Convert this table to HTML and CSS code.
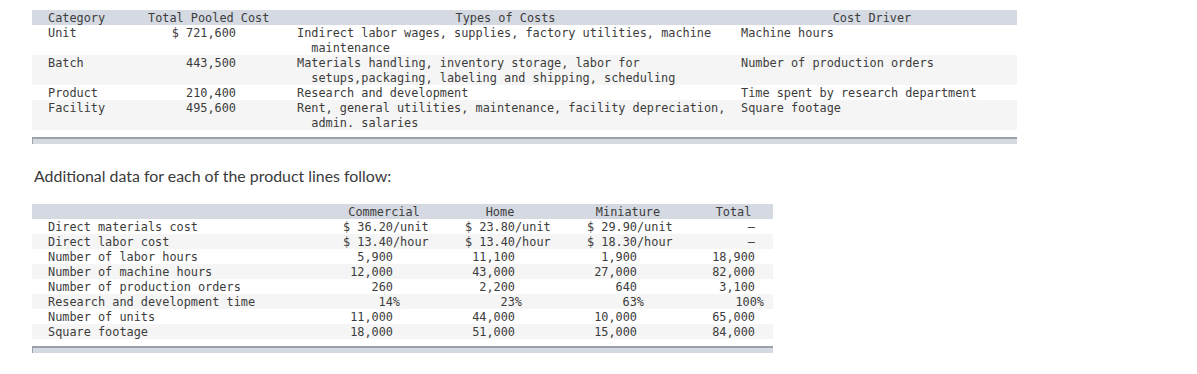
FILE: index.html
```html
<!DOCTYPE html>
<html lang="en">
<head>
<meta charset="utf-8">
<title>Activity cost pools</title>
<link rel="stylesheet" href="styles.css">
</head>
<body>
<div class="page">
  <div class="tbl pools">
    <div class="row head">
      <div class="c cat">Category</div>
      <div class="c pool">Total Pooled Cost</div>
      <div class="c types">Types of Costs</div>
      <div class="c driver">Cost Driver</div>
    </div>
    <div class="row">
      <div class="c cat">Unit</div>
      <div class="c pool">$ 721,600</div>
      <div class="c types">Indirect labor wages, supplies, factory utilities, machine maintenance</div>
      <div class="c driver">Machine hours</div>
    </div>
    <div class="row alt">
      <div class="c cat">Batch</div>
      <div class="c pool">443,500</div>
      <div class="c types">Materials handling, inventory storage, labor for setups,packaging, labeling and shipping, scheduling</div>
      <div class="c driver">Number of production orders</div>
    </div>
    <div class="row">
      <div class="c cat">Product</div>
      <div class="c pool">210,400</div>
      <div class="c types">Research and development</div>
      <div class="c driver">Time spent by research department</div>
    </div>
    <div class="row alt">
      <div class="c cat">Facility</div>
      <div class="c pool">495,600</div>
      <div class="c types">Rent, general utilities, maintenance, facility depreciation, admin. salaries</div>
      <div class="c driver">Square footage</div>
    </div>
  </div>
  <div class="bar bar-wide"></div>

  <p class="intro">Additional data for each of the product lines follow:</p>

  <div class="tbl lines">
    <div class="row head">
      <div class="c label"></div>
      <div class="c com">Commercial</div>
      <div class="c home">Home</div>
      <div class="c mini">Miniature</div>
      <div class="c tot">Total</div>
    </div>
    <div class="row">
      <div class="c label">Direct materials cost</div>
      <div class="c com rate">$ 36.20/unit</div>
      <div class="c home rate">$ 23.80/unit</div>
      <div class="c mini rate">$ 29.90/unit</div>
      <div class="c tot num">–</div>
    </div>
    <div class="row alt">
      <div class="c label">Direct labor cost</div>
      <div class="c com rate">$ 13.40/hour</div>
      <div class="c home rate">$ 13.40/hour</div>
      <div class="c mini rate">$ 18.30/hour</div>
      <div class="c tot num">–</div>
    </div>
    <div class="row">
      <div class="c label">Number of labor hours</div>
      <div class="c com num">5,900</div>
      <div class="c home num">11,100</div>
      <div class="c mini num">1,900</div>
      <div class="c tot num">18,900</div>
    </div>
    <div class="row alt">
      <div class="c label">Number of machine hours</div>
      <div class="c com num">12,000</div>
      <div class="c home num">43,000</div>
      <div class="c mini num">27,000</div>
      <div class="c tot num">82,000</div>
    </div>
    <div class="row">
      <div class="c label">Number of production orders</div>
      <div class="c com num">260</div>
      <div class="c home num">2,200</div>
      <div class="c mini num">640</div>
      <div class="c tot num">3,100</div>
    </div>
    <div class="row alt">
      <div class="c label">Research and development time</div>
      <div class="c com pct">14%</div>
      <div class="c home pct">23%</div>
      <div class="c mini pct">63%</div>
      <div class="c tot pct">100%</div>
    </div>
    <div class="row">
      <div class="c label">Number of units</div>
      <div class="c com num">11,000</div>
      <div class="c home num">44,000</div>
      <div class="c mini num">10,000</div>
      <div class="c tot num">65,000</div>
    </div>
    <div class="row alt">
      <div class="c label">Square footage</div>
      <div class="c com num">18,000</div>
      <div class="c home num">51,000</div>
      <div class="c mini num">15,000</div>
      <div class="c tot num">84,000</div>
    </div>
  </div>
  <div class="bar bar-narrow"></div>
</div>
</body>
</html>
```
FILE: styles.css
```css
html, body {
  margin: 0;
  padding: 0;
  background: #ffffff;
}

.page {
  padding: 10px 0 0 32px;
}

.tbl {
  font-family: "DejaVu Sans Mono", "Liberation Mono", monospace;
  font-size: 11.86px;
  line-height: 15px;
  color: #3c3c3c;
}

.row {
  display: grid;
}

.row.head {
  background: #d4d9e2;
}

.row.alt {
  background: #f5f5f5;
}

.c {
  white-space: pre-wrap;
  padding-top: 1px;
  margin-bottom: -1px;
}

/* ---- top table: cost pools ---- */
.pools {
  width: 985px;
}

.pools .row {
  grid-template-columns: 106px 140px 455px 284px;
}

.pools .cat {
  padding-left: 16px;
}

.pools .pool {
  text-align: right;
  padding-right: 42px;
}

.pools .head .pool {
  text-align: left;
  padding-left: 10px;
  padding-right: 0;
}

.pools .types {
  padding-left: calc(19px + 2ch);
  text-indent: -2ch;
  padding-right: 1px;
}

.pools .head .types {
  text-align: center;
  padding-left: 0;
  padding-right: 0;
  text-indent: 0;
}

.pools .driver {
  padding-left: 8px;
}

.pools .head .driver {
  text-align: center;
  padding-left: 0;
  padding-right: 6px;
}

/* ---- bars under tables ---- */
.bar {
  margin-top: 7px;
  height: 5px;
  background: #d4d9e2;
  border-top: 2px solid #9ba1ab;
  border-left: 1px solid #9ba1ab;
  box-sizing: content-box;
}

.bar-wide {
  width: 984px;
}

.bar-narrow {
  width: 740px;
}

/* ---- intro sentence ---- */
.intro {
  margin: 23px 0 19px 2px;
  font-family: Lato, "Open Sans", sans-serif;
  font-size: 15.9px;
  line-height: 18px;
  color: #3a3a3a;
}

/* ---- bottom table: product lines ---- */
.lines {
  width: 741px;
}

.lines .row {
  grid-template-columns: 298px 108px 124px 132px 79px;
}

.lines .label {
  padding-left: 16px;
}

.lines .head .c {
  text-align: center;
}

.lines .num,
.lines .pct {
  text-align: right;
}

.lines .com.rate { padding-left: 13px; }
.lines .home.rate { padding-left: 27px; }
.lines .mini.rate { padding-left: 25px; }

.lines .com.num { padding-right: 45px; }
.lines .home.num { padding-right: 47px; }
.lines .mini.num { padding-right: 57px; }
.lines .tot.num { padding-right: 18px; }

.lines .com.pct { padding-right: 38px; }
.lines .home.pct { padding-right: 40px; }
.lines .mini.pct { padding-right: 50px; }
.lines .tot.pct { padding-right: 9px; }
```
